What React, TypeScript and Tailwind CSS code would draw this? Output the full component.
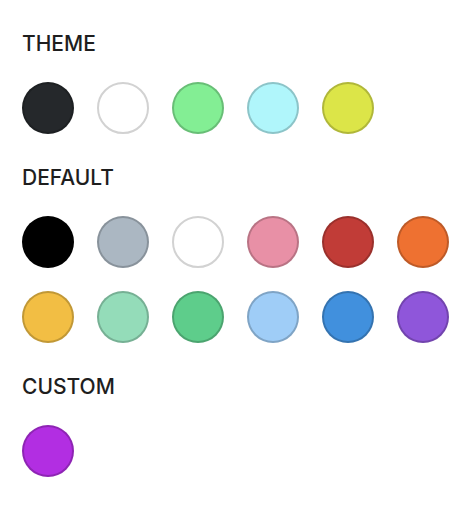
const palettes = [
  {
    title: 'THEME',
    colors: ['#25282b', '#ffffff', '#83ee94', '#b0f6fb', '#dce548'],
  },
  {
    title: 'DEFAULT',
    colors: [
      '#000000',
      '#abb7c2',
      '#ffffff',
      '#e890a6',
      '#c13c37',
      '#ee7131',
      '#f2be44',
      '#94dcb9',
      '#5ecd8b',
      '#9fcdf7',
      '#4190dd',
      '#8f56da',
    ],
  },
  {
    title: 'CUSTOM',
    colors: ['#b22ee2'],
  },
];

function Swatch({ color }: { color: string }) {
  const isWhite = color === '#ffffff';
  return (
    <button
      type="button"
      aria-label={color}
      className={`h-[52px] w-[52px] rounded-full border-2 ${
        isWhite ? 'border-[#d2d2d2]' : 'border-black/20'
      }`}
      style={{ backgroundColor: color }}
    />
  );
}

export default function App() {
  return (
    <div className="min-h-[509px] bg-white pl-[22px] pt-[32px] font-['Inter',sans-serif] text-[#1e1e1e]">
      <div className="flex flex-col gap-[32px]">
        {palettes.map((palette) => (
          <section key={palette.title}>
            <h2 className="mb-[26px] text-[21px] font-medium leading-[24px]">
              {palette.title}
            </h2>
            <div className="grid w-[427px] grid-cols-6 gap-[23px]">
              {palette.colors.map((color, i) => (
                <Swatch key={i} color={color} />
              ))}
            </div>
          </section>
        ))}
      </div>
    </div>
  );
}
